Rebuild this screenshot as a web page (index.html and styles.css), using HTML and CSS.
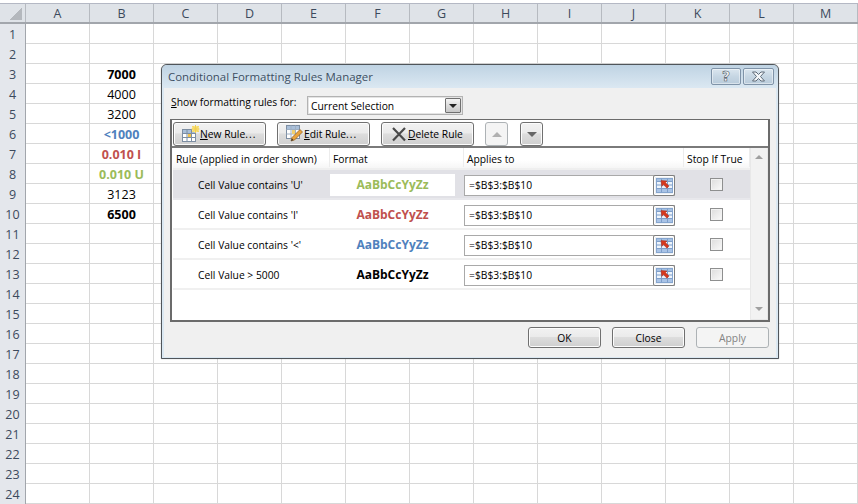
FILE: index.html
```html
<!DOCTYPE html>
<html lang="en">
<head>
<meta charset="utf-8">
<title>Conditional Formatting Rules Manager</title>
<link rel="stylesheet" href="styles.css">
</head>
<body>
<svg class="defs" width="0" height="0" aria-hidden="true">
  <symbol id="range" viewBox="0 0 17 15">
    <rect x="0.5" y="0.5" width="16" height="14" fill="#eef4fb" stroke="#86a6cf"/>
    <rect x="1" y="1" width="15" height="2" fill="#a5c0e2"/>
    <rect x="1" y="11" width="15" height="3" fill="#a9c3e6"/>
    <path d="M0.5 3.5H16.5M0.5 7H16.5M0.5 10.5H16.5M5.5 0.5V14.5M11.5 0.5V14.5" stroke="#7f9fca" fill="none"/>
    <path d="M5 2.5L11 3L9.4 4.6L13 8L11 10.2L7.4 6.6L5.8 8.4Z" fill="#d6381e" stroke="#a8301c" stroke-width="0.5"/>
  </symbol>
</svg>
<div class="topbar"></div>
<div class="sheet">
  <div class="row head"><div class="corner"><i></i></div><div>A</div><div>B</div><div>C</div><div>D</div><div>E</div><div>F</div><div>G</div><div>H</div><div>I</div><div>J</div><div>K</div><div>L</div><div>M</div></div>
  <div class="row"><div class="num">1</div></div>
  <div class="row"><div class="num">2</div></div>
  <div class="row"><div class="num">3</div><div class="cell"></div><div class="cell bold">7000</div></div>
  <div class="row"><div class="num">4</div><div class="cell"></div><div class="cell">4000</div></div>
  <div class="row"><div class="num">5</div><div class="cell"></div><div class="cell">3200</div></div>
  <div class="row"><div class="num">6</div><div class="cell"></div><div class="cell bold blue">&lt;1000</div></div>
  <div class="row"><div class="num">7</div><div class="cell"></div><div class="cell bold red">0.010 I</div></div>
  <div class="row"><div class="num">8</div><div class="cell"></div><div class="cell bold green">0.010 U</div></div>
  <div class="row"><div class="num">9</div><div class="cell"></div><div class="cell">3123</div></div>
  <div class="row"><div class="num">10</div><div class="cell"></div><div class="cell bold">6500</div></div>
  <div class="row"><div class="num">11</div></div>
  <div class="row"><div class="num">12</div></div>
  <div class="row"><div class="num">13</div></div>
  <div class="row"><div class="num">14</div></div>
  <div class="row"><div class="num">15</div></div>
  <div class="row"><div class="num">16</div></div>
  <div class="row"><div class="num">17</div></div>
  <div class="row"><div class="num">18</div></div>
  <div class="row"><div class="num">19</div></div>
  <div class="row"><div class="num">20</div></div>
  <div class="row"><div class="num">21</div></div>
  <div class="row"><div class="num">22</div></div>
  <div class="row"><div class="num">23</div></div>
  <div class="row"><div class="num">24</div></div>
</div>

<div class="dialog">
  <div class="titlebar">
    <span class="title">Conditional Formatting Rules Manager</span>
    <span class="capbtn help">?</span>
    <span class="capbtn close">
      <svg width="17" height="11" viewBox="0 0 17 11"><path d="M2.5 1H6L8.5 3.5L11 1H14.5L10.5 5.5L14.5 10H11L8.5 7.5L6 10H2.5L6.5 5.5Z" fill="#f4f7fa" stroke="#5e6b78"/></svg>
    </span>
  </div>
  <div class="body">
    <div class="showrow">
      <span class="label"><u>S</u>how formatting rules for:</span>
      <div class="select">
        <span>Current Selection</span>
        <span class="selbtn"><i class="arrow-down dark"></i></span>
      </div>
    </div>
    <div class="panel">
      <div class="toolbar">
        <span class="btn wide">
          <svg width="18" height="18" viewBox="0 0 18 18"><rect x="0.5" y="4.5" width="13" height="12" fill="#fff" stroke="#7d8ea3"/><rect x="1" y="5" width="12" height="3" fill="#a9bfd9"/><path d="M0.5 8.5H13.5M0.5 12.5H13.5M5 4.5V16.5M9.5 4.5V16.5" stroke="#7d8ea3" fill="none"/><rect x="6" y="9" width="3" height="3" fill="#f0c24a"/><rect x="10" y="1" width="7" height="6" fill="#f8e58a"/><path d="M13.5 0V8M9.5 4H17.5M10.5 1L16.5 7M16.5 1L10.5 7" stroke="#f3cf4e" stroke-width="1"/></svg>
          <span><u>N</u>ew Rule<span class="dots">...</span></span>
        </span>
        <span class="btn wide gap">
          <svg width="18" height="18" viewBox="0 0 18 18"><rect x="0.5" y="0.5" width="13" height="13" fill="#fff" stroke="#7d8ea3"/><rect x="1" y="1" width="12" height="3" fill="#a9bfd9"/><path d="M0.5 4.5H13.5M0.5 9H13.5M5 0.5V13.5M9.5 0.5V13.5" stroke="#9fb0c4" fill="none"/><rect x="6" y="5" width="3" height="4" fill="#f0d070"/><path d="M5 16L6 12.5L14 4.5L16.5 7L8.5 15Z" fill="#e8a33c" stroke="#8a5a20" stroke-width="0.7"/><path d="M5 16L6 13.5L7.5 15Z" fill="#333"/></svg>
          <span><u>E</u>dit Rule<span class="dots">...</span></span>
        </span>
        <span class="btn wide gap del">
          <svg width="16" height="16" viewBox="0 0 16 16"><path d="M2 2L14 14.5M14 2L2 14.5" stroke="#4a4a4a" stroke-width="2.2" fill="none"/></svg>
          <span><u>D</u>elete Rule</span>
        </span>
        <span class="btn small off gap"><i class="arrow-up"></i></span>
        <span class="btn small gap2"><i class="arrow-down"></i></span>
      </div>
      <div class="listwrap">
        <div class="list">
          <div class="lhead">
            <span>Rule (applied in order shown)</span>
            <span>Format</span>
            <span>Applies to</span>
            <span>Stop If True</span>
          </div>
          <div class="rule selected">
            <span class="rname">Cell Value contains 'U'</span>
            <span class="fmt swatch green">AaBbCcYyZz</span>
            <span class="applies">=$B$3:$B$10<span class="rangebtn"><svg width="17" height="15"><use href="#range"/></svg></span></span>
            <span class="stop"><i class="check"></i></span>
          </div>
          <div class="rule">
            <span class="rname">Cell Value contains 'I'</span>
            <span class="fmt red">AaBbCcYyZz</span>
            <span class="applies">=$B$3:$B$10<span class="rangebtn"><svg width="17" height="15"><use href="#range"/></svg></span></span>
            <span class="stop"><i class="check"></i></span>
          </div>
          <div class="rule">
            <span class="rname">Cell Value contains '&lt;'</span>
            <span class="fmt blue">AaBbCcYyZz</span>
            <span class="applies">=$B$3:$B$10<span class="rangebtn"><svg width="17" height="15"><use href="#range"/></svg></span></span>
            <span class="stop"><i class="check"></i></span>
          </div>
          <div class="rule">
            <span class="rname">Cell Value &gt; 5000</span>
            <span class="fmt black">AaBbCcYyZz</span>
            <span class="applies">=$B$3:$B$10<span class="rangebtn"><svg width="17" height="15"><use href="#range"/></svg></span></span>
            <span class="stop"><i class="check"></i></span>
          </div>
        </div>
        <div class="scroll"><i class="sc-up"></i><i class="sc-down"></i></div>
      </div>
    </div>
    <div class="footer">
      <span class="btn foot">OK</span>
      <span class="btn foot">Close</span>
      <span class="btn foot off">Apply</span>
    </div>
  </div>
</div>
</body>
</html>
```
FILE: styles.css
```css
* { box-sizing: border-box; }
html, body { margin: 0; padding: 0; }
body {
  width: 858px; height: 504px; overflow: hidden; background: #fff;
  font-family: "Open Sans", "Noto Sans", sans-serif; color: #000;
  position: relative;
}
.defs { position: absolute; }
i { display: block; }
u { text-decoration-thickness: 1px; text-underline-offset: 1px; }

.topbar { height: 4px; background: #fff; border-bottom: 1px solid #b4b8c4; }
.row {
  display: grid; grid-template-columns: 26px repeat(13, 64px);
  height: 20px;
  background:
    linear-gradient(to top, #d8d8d8 1px, transparent 1px),
    repeating-linear-gradient(to right, transparent 0 63px, #d8d8d8 63px 64px);
  background-position: 0 0, 26px 0;
  background-repeat: no-repeat;
}
.head {
  background: #dfe3e8;
  border-bottom: 2px solid #a2a6ac;
  font-size: 12.5px; color: #3c4a5c; text-align: center; line-height: 20px;
}
.head > div { border-right: 1px solid #b6bac0; height: 18px; }
.corner { position: relative; display: flex; justify-content: flex-end; align-items: flex-end; padding: 0 3px 2px 0; background: #dfe3e8; }
.corner i { width: 12px; height: 12px; background: linear-gradient(135deg, transparent 50%, #b4b8bd 50%); }
.num {
  background: #e4e7ec; border-right: 1px solid #a2a6ac; border-bottom: 1px solid #c2c6cc;
  font-size: 12.5px; color: #3c4a5c; text-align: center; line-height: 21px;
}
.cell { font-size: 12.5px; text-align: center; line-height: 21px; padding-right: 1px; }
.bold { font-weight: 700; }
.blue { color: #4f81bd; }
.red { color: #c0504d; }
.green { color: #9bbb59; }
.black { color: #000; }

.dialog {
  position: absolute; left: 161px; top: 64px; width: 618px; height: 295px;
  border: 1px solid #50555a; border-radius: 6px 6px 0 0;
  background: #dbe8f2; padding: 0 2px 2px;
  box-shadow: 0 0 1px #888;
  font-family: "Open Sans", "Noto Sans", sans-serif; font-size: 10.3px;
}
.titlebar {
  height: 23px; margin: 0 -2px; padding: 3px 4px 0 6px;
  background: linear-gradient(#bfd3e3, #dbe8f2);
  border-radius: 5px 5px 0 0;
  display: flex; align-items: flex-start; gap: 2px;
}
.title { flex: 1; font-size: 11.45px; color: #3d4f62; line-height: 17px; }
.capbtn {
  width: 30px; height: 17px; border: 1px solid #7f93a8; border-radius: 2px;
  background: linear-gradient(#dbe6ef, #c6d6e3 50%, #b9cbdb);
  display: flex; align-items: center; justify-content: center;
  box-shadow: inset 0 0 0 1px rgba(255,255,255,.45);
}
.help { font: 700 14px/15px "DejaVu Sans", sans-serif; color: #f6f8fa; -webkit-text-stroke: .6px #4f5a66; }
.close { width: 31px; }

.body { height: 269px; background: #f0f0f0; padding: 8px 6px 0 6px; }
.showrow { display: flex; gap: 11px; height: 19px; }
.label { width: 125px; margin-left: 1px; line-height: 12px; white-space: nowrap; }
.select {
  width: 156px; height: 19px; border: 1px solid #b3b3b3; background: #fff; outline: 1px solid #e4e4e4; outline-offset: -2px;
  display: flex; align-items: center; justify-content: space-between; padding: 0 1px 0 3px;
}
.selbtn {
  width: 16px; height: 15px; border: 1px solid #707070; border-radius: 1px;
  background: linear-gradient(#f4f4f4, #dcdcdc 50%, #c8c8c8);
  display: flex; align-items: center; justify-content: center;
}
.arrow-down { width: 0; height: 0; border: 5px solid transparent; border-bottom: 0; border-top-color: #666; }
.arrow-down.dark { border-width: 4px 4px 0; border-top-color: #222; }
.arrow-up { width: 0; height: 0; border: 5px solid transparent; border-top: 0; border-bottom-color: #b0b0b0; }

.panel {
  width: 600px; height: 203px; margin-top: 4px;
  border: 2px solid #6b6b6b; border-top-width: 1px; border-bottom-width: 2px;
  background: #fff;
}
.toolbar { height: 28px; padding: 2px 1px 0; display: flex; align-items: flex-start; border-bottom: 2px solid #7a7a7a; }
.btn {
  height: 24px; border: 1px solid #707070; border-radius: 3px;
  background: linear-gradient(#f2f2f2, #ebebeb 45%, #dddddd 50%, #cfcfcf);
  box-shadow: inset 0 0 0 1px #fcfcfc;
  display: inline-flex; align-items: center; justify-content: center;
  color: #000; white-space: nowrap;
}
.wide { width: 93px; justify-content: flex-start; padding-left: 8px; }
.del { gap: 1px; padding-left: 9px; }
.dots { letter-spacing: 1px; }
.gap { margin-left: 11px; }
.gap2 { margin-left: 12px; }
.small { width: 23px; }
.off { border-color: #adb2b5; background: #f4f4f4; color: #838383; box-shadow: none; }

.listwrap { display: flex; height: 172px; }
.list { width: 579px; margin-left: 1px; }
.lhead {
  display: grid; grid-template-columns: 157px 134px 220px 1fr;
  height: 22px; line-height: 22px; border-bottom: 2px solid #efefef;
  background: linear-gradient(#fff 60%, #f6f6f6);
}
.lhead span { padding-left: 3px; border-right: 1px solid #ececec; height: 19px; }
.rule {
  display: grid; grid-template-columns: 157px 134px 220px 1fr;
  height: 30px; align-items: center; border-bottom: 2px solid #f0f0f0;
}
.rule.selected { background: #e1e1e6; border-bottom-color: #e8e8ec; }
.rname { padding-left: 25px; padding-top: 2px; }
.fmt {
  font-weight: 700; font-size: 12px; text-align: center; width: 125px;
  height: 22px; line-height: 21px; margin-top: 2px;
}
.swatch { background: #fff; }
.applies {
  height: 21px; width: 211px; margin-top: 3px; border: 1px solid #a9a9a9; background: #fff;
  padding-left: 4px; line-height: 19px;
  display: flex; justify-content: space-between;
  color: #000;
}
.rangebtn {
  width: 22px; height: 21px; margin: -1px -1px 0 0;
  border: 1px solid #7f7f7f; border-radius: 2px; background: #eceff3;
  box-shadow: inset 0 0 0 1px #fff;
  display: flex; align-items: center; justify-content: center;
}
.stop { display: flex; justify-content: center; padding-right: 1px; }
.check {
  width: 13px; height: 13px; border: 1px solid #8e8f8f;
  background: linear-gradient(135deg, #dcdcdc, #fafafa);
  box-shadow: inset 0 0 0 1px #f2f2f2;
}
.scroll {
  width: 18px; background: #f2f2f2; border: 1px solid #e8e8e8; border-top: 0;
  display: flex; flex-direction: column; justify-content: space-between; align-items: center; padding: 7px 0 8px;
  height: 172px;
}
.sc-up { width: 0; height: 0; border: 4px solid transparent; border-top: 0; border-bottom-color: #a0a0a0; }
.sc-down { width: 0; height: 0; border: 4px solid transparent; border-bottom: 0; border-top-color: #a0a0a0; }

.footer { display: flex; justify-content: flex-end; gap: 11px; margin-top: 5px; padding-right: 1px; }
.btn.foot { width: 73px; height: 21px; }
```
